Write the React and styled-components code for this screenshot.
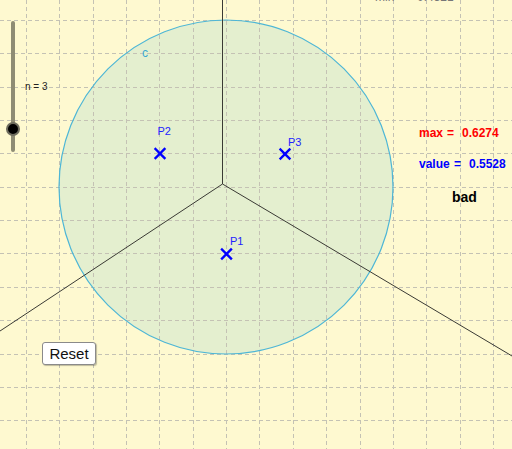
import React from 'react';
import styled, { createGlobalStyle } from 'styled-components';

const GlobalStyle = createGlobalStyle`
  html, body {
    margin: 0;
    padding: 0;
    background: #fef9d0;
  }
`;

const W = 512;
const H = 449;

// grid spacing taken from the view
const GRID_X0 = 26;
const GRID_Y0 = 20;
const STEP = 33.35;

const CENTER = { x: 226, y: 187, r: 167 };
const VERTEX = { x: 222.5, y: 184 };

const POINTS = [
  { name: 'P1', x: 226.5, y: 254, lx: 230, ly: 245 },
  { name: 'P2', x: 160, y: 153.5, lx: 157.5, ly: 135 },
  { name: 'P3', x: 285, y: 154, lx: 288, ly: 146 },
];

const Canvas = styled.div`
  position: relative;
  width: ${W}px;
  height: ${H}px;
  overflow: hidden;
  background: #fef9d0;
  font-family: 'Liberation Sans', Arial, sans-serif;
`;

const Drawing = styled.svg`
  display: block;
  width: ${W}px;
  height: ${H}px;
`;

const SliderTrack = styled.div`
  position: absolute;
  left: 11px;
  top: 21px;
  width: 4px;
  height: 131px;
  border-radius: 2px;
  background: #8e8c74;
`;

const SliderKnob = styled.div`
  position: absolute;
  left: 6px;
  top: ${(p) => p.$y - 7}px;
  width: 10px;
  height: 10px;
  border-radius: 50%;
  background: #000;
  border: 2px solid #6d6c5e;
`;

const SliderLabel = styled.span`
  position: absolute;
  left: 25px;
  top: 81px;
  font-size: 10px;
  color: #222;
  white-space: pre;
`;

const ResetButton = styled.button`
  position: absolute;
  left: 42px;
  top: 342px;
  width: 54px;
  height: 23px;
  padding: 0;
  border: 1px solid #8a8a8a;
  border-radius: 3px;
  background: #fff;
  box-shadow: 1px 1px 1px rgba(0, 0, 0, 0.25);
  font-family: 'Liberation Sans', Arial, sans-serif;
  font-size: 15px;
  color: #111;
  cursor: pointer;
`;

function Grid() {
  const xs = [];
  for (let x = GRID_X0; x < W; x += STEP) xs.push(x);
  const ys = [];
  for (let y = GRID_Y0; y < H; y += STEP) ys.push(y);
  return (
    <g stroke="#c4c2b4" strokeWidth="1" strokeDasharray="4 3">
      {xs.map((x) => (
        <line key={'x' + x} x1={Math.round(x) + 0.5} y1="0" x2={Math.round(x) + 0.5} y2={H} />
      ))}
      {ys.map((y) => (
        <line key={'y' + y} x1="0" y1={Math.round(y) + 0.5} x2={W} y2={Math.round(y) + 0.5} />
      ))}
    </g>
  );
}

function Cross({ x, y }) {
  const s = 4.5;
  return (
    <g stroke="#0000ff" strokeWidth="2.4" strokeLinecap="square">
      <line x1={x - s} y1={y - s} x2={x + s} y2={y + s} />
      <line x1={x - s} y1={y + s} x2={x + s} y2={y - s} />
    </g>
  );
}

export default function App() {
  return (
    <>
      <GlobalStyle />
      <Canvas>
        <Drawing viewBox={`0 0 ${W} ${H}`}>
          <circle cx={CENTER.x} cy={CENTER.y} r={CENTER.r} fill="#e4efcf" />
          <Grid />
          <circle
            cx={CENTER.x}
            cy={CENTER.y}
            r={CENTER.r}
            fill="none"
            stroke="#4db6d6"
            strokeWidth="1.2"
          />

          {/* the three half-lines */}
          <g stroke="#3a3a34" strokeWidth="1">
            <line x1={VERTEX.x} y1={VERTEX.y} x2={VERTEX.x} y2="0" />
            <line x1={VERTEX.x} y1={VERTEX.y} x2="0" y2="331" />
            <line x1={VERTEX.x} y1={VERTEX.y} x2={W} y2="356" />
          </g>

          <text x="142" y="57" fontSize="12" fill="#3aa9d2" fontFamily="Liberation Sans, Arial, sans-serif">
            c
          </text>

          {POINTS.map((p) => (
            <g key={p.name}>
              <Cross x={p.x} y={p.y} />
              <text
                x={p.lx}
                y={p.ly}
                fontSize="11"
                fill="#2323ff"
                fontFamily="Liberation Sans, Arial, sans-serif"
              >
                {p.name}
              </text>
            </g>
          ))}

          <g fontFamily="Liberation Sans, Arial, sans-serif" fontSize="12" fontWeight="bold">
            <text x="419" y="137" fill="#ff0000">max</text>
            <text x="447" y="137" fill="#ff0000">=</text>
            <text x="462" y="137" fill="#ff0000">0.6274</text>

            <text x="419" y="168" fill="#0000ff">value</text>
            <text x="454" y="168" fill="#0000ff">=</text>
            <text x="469" y="168" fill="#0000ff">0.5528</text>

            <text x="452" y="202" fill="#000" fontSize="14">bad</text>

            <text x="375" y="1" fill="#777" fontWeight="normal">min</text>
            <text x="417" y="1" fill="#777" fontWeight="normal">0.4521</text>
          </g>
        </Drawing>

        <SliderTrack />
        <SliderKnob $y={129} />
        <SliderLabel>n = 3</SliderLabel>

        <ResetButton>Reset</ResetButton>
      </Canvas>
    </>
  );
}
